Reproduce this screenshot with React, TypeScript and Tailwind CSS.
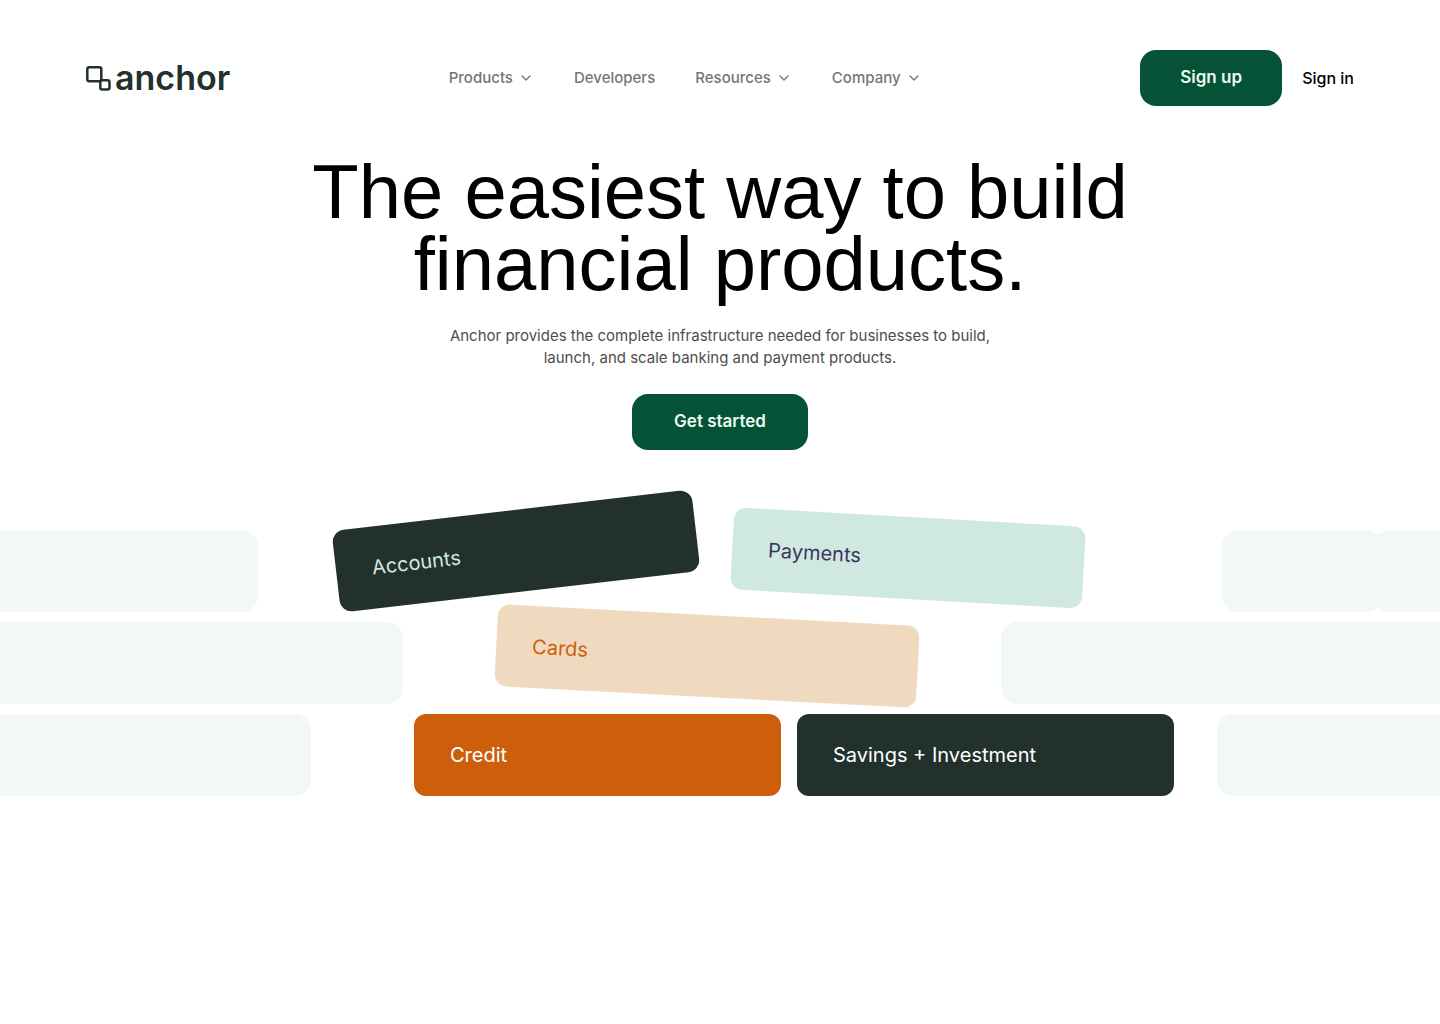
import { ChevronDown } from 'lucide-react';

const navItems = [
  { label: 'Products', hasMenu: true },
  { label: 'Developers', hasMenu: false },
  { label: 'Resources', hasMenu: true },
  { label: 'Company', hasMenu: true },
];

export default function App() {
  return (
    <div className="min-h-screen overflow-x-hidden bg-white font-['Inter',sans-serif] text-black">
      {/* Navbar */}
      <header className="flex items-center justify-between px-[86px] pt-[50px]">
        <a href="#" className="flex items-center gap-1 text-[#23312d]">
          <LogoMark />
          <span className="text-[34px] leading-10 font-semibold">anchor</span>
        </a>

        <nav className="flex items-center gap-10 text-[15px] font-medium text-[#757575]">
          {navItems.map((item) =>
            item.hasMenu ? (
              <button key={item.label} type="button" className="flex items-center gap-[5px]">
                {item.label}
                <ChevronDown className="size-4" strokeWidth={2} />
              </button>
            ) : (
              <a key={item.label} href="#">
                {item.label}
              </a>
            )
          )}
        </nav>

        <div className="flex items-center gap-5">
          <button
            type="button"
            className="h-14 w-[142px] rounded-2xl bg-[#065237] text-[17px] font-semibold text-[#e9fbf3]"
          >
            Sign up
          </button>
          <a href="#" className="text-base font-medium">
            Sign in
          </a>
        </div>
      </header>

      <main>
        {/* Hero */}
        <section className="flex flex-col items-center pt-[50px] text-center">
          <h1 className="font-['Liberation_Sans',sans-serif] text-[76px] leading-[72px]">
            The easiest way to build
            <br />
            financial products.
          </h1>
          <p className="mt-[25px] text-[15px] leading-[22px] text-[#4d4d4d]">
            Anchor provides the complete infrastructure needed for businesses to build,
            <br />
            launch, and scale banking and payment products.
          </p>
          <button
            type="button"
            className="mt-[25px] h-14 w-44 rounded-2xl bg-[#065237] text-[17px] font-semibold text-[#e9fbf3]"
          >
            Get started
          </button>
        </section>

        {/* Product blocks */}
        <section className="mt-20 flex flex-col gap-[10px]">
          <div className="flex h-[82px]">
            <div className="grow-[258] basis-0 rounded-r-2xl bg-[#f2f8f6]" />
            <Block
              label="Accounts"
              className="ml-[77px] w-[362px] -translate-y-5 rotate-[-6.6deg] bg-[#23312d] text-[#cfe9e0]"
            />
            <Block
              label="Payments"
              className="ml-[35px] w-[352px] -translate-y-[13px] rotate-[3.2deg] bg-[#cfe9e0] text-[#3b3561]"
            />
            <div className="ml-[138px] flex grow-[218] basis-0">
              <div className="w-[160px] rounded-2xl bg-[#f2f8f6]" />
              <div className="-ml-2 flex-1 rounded-l-2xl bg-[#f2f8f6]" />
            </div>
          </div>

          <div className="flex h-[82px]">
            <div className="grow-[403] basis-0 rounded-r-2xl bg-[#f2f8f6]" />
            <Block
              label="Cards"
              className="ml-[93px] w-[422px] -translate-y-[7px] rotate-3 bg-[#efdabf] text-[#cc5f0c]"
            />
            <div className="ml-[83px] grow-[439] basis-0 rounded-l-2xl bg-[#f2f8f6]" />
          </div>

          <div className="flex h-[82px]">
            <div className="grow-[311] basis-0 rounded-r-2xl bg-[#f2f8f6]" />
            <Block label="Credit" className="ml-[103px] w-[367px] bg-[#cd5f0c] text-white" />
            <Block label="Savings + Investment" className="ml-4 w-[377px] bg-[#23312d] text-white" />
            <div className="ml-[43px] grow-[223] basis-0 rounded-l-2xl bg-[#f2f8f6]" />
          </div>
        </section>
      </main>
    </div>
  );
}

function Block({ label, className }: { label: string; className: string }) {
  return (
    <div className={`flex shrink-0 items-center rounded-xl px-9 text-[20px] ${className}`}>
      {label}
    </div>
  );
}

function LogoMark() {
  return (
    <svg className="h-[25px] w-[25px]" viewBox="0 0 25 25" fill="none" stroke="currentColor" strokeWidth="2.5">
      <rect x="1.3" y="1.3" width="14" height="14" rx="2" />
      <rect x="14.3" y="14.3" width="9.2" height="9.2" rx="2" />
    </svg>
  );
}
